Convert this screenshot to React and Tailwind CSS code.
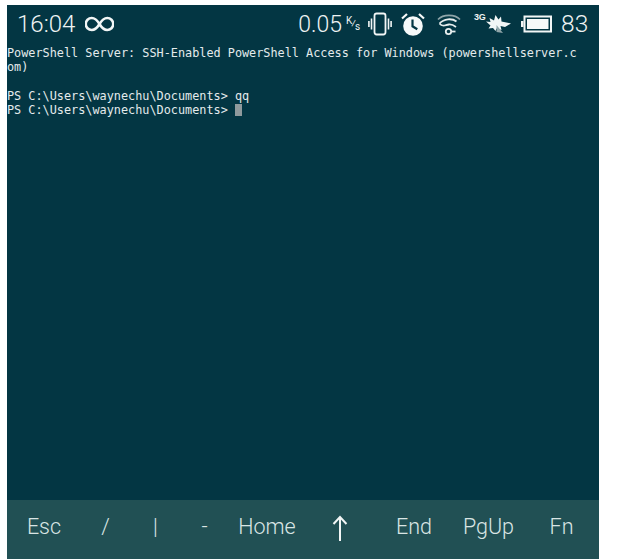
const Vibrate = () => (
  <svg width="24" height="24" viewBox="0 0 24 24" fill="none" stroke="#f2f6f6">
    <rect x="6.500" y="1.500" width="11" height="21" rx="2.200" strokeWidth="1.800" />
    <path d="M3.500 6.500v11M0.900 9v6M20.500 6.500v11M23.100 9v6" strokeWidth="1.600" />
  </svg>
);
const Alarm = () => (
  <svg width="24" height="25" viewBox="0 0 24 25">
    <circle cx="12" cy="14" r="9.800" fill="#f6f9f9" />
    <path d="M11.500 7.500v6.800l4.800 3" fill="none" stroke="#033643" strokeWidth="2.200" />
    <path d="M1 6.500 6 2M23 6.500 18 2" fill="none" stroke="#f6f9f9" strokeWidth="2.200" />
  </svg>
);
const Wifi = () => (
  <svg width="24" height="24" viewBox="0 0 24 24" fill="none">
    <path d="M1 7.500C6 2 18 2 23 7.500" stroke="#8fa5a9" strokeWidth="1.600" />
    <path d="M19.500 9.500C15 6 7 6.500 2.500 11.500" stroke="#e6eded" strokeWidth="1.800" />
    <path d="M2.500 11.500C5.500 15.500 8 13 12 12.500C15 12.200 17 13.500 19 15" stroke="#e6eded" strokeWidth="1.800" />
    <circle cx="11.500" cy="19.500" r="2.700" stroke="#e6eded" strokeWidth="1.800" />
    <path d="M14 19.500h4.500" stroke="#e6eded" strokeWidth="1.800" />
  </svg>
);
const Signal = () => (
  <svg width="25" height="22" viewBox="0 0 25 22">
    <path d="M0 8.500 4.500 9 3.500 5 8 7.500 9.500 2 12.500 6.500 15 3.500 15.500 8.500 25 10.500 19 14 14.500 13 15.500 17 10.500 15.500 9.500 18 7 15 2.500 15.500 4.500 12.500Z" fill="#f2f6f6" />
    <path d="M10.500 12 17 20 10.500 19Z" fill="#8fa5a9" />
  </svg>
);
const Battery = () => (
  <svg width="31" height="18" viewBox="0 0 31 18">
    <path d="M0 6h2.500v6h-2.500z" fill="#f2f6f6" />
    <rect x="3.500" y="1.500" width="26.500" height="15" fill="none" stroke="#f2f6f6" strokeWidth="2" />
    <rect x="6" y="4" width="21.500" height="10" fill="#f6f9f9" />
  </svg>
);
const Up = () => (
  <svg width="16" height="26" viewBox="0 0 16 26" fill="none" stroke="#f2f6f6" strokeWidth="2">
    <path d="M8 26V2M1.500 9 8 2l6.500 7" />
  </svg>
);

const keys = [
  ["Esc", "w-[74px]"],
  ["/", "w-[49px]"],
  ["|", "w-[51px]"],
  ["-", "w-[47px]"],
  ["Home", "w-[78px]"],
  ["up", "w-[67px]"],
  ["End", "w-[82px]"],
  ["PgUp", "w-[67px]"],
  ["Fn", "w-[77px] pl-[2px]"],
];

export default function App() {
  return (
    <div className="w-[621px] h-[559px] bg-white pt-[5px] pl-[7px] overflow-hidden">
      <div className="w-[592px] h-[554px] bg-[#033643] flex flex-col">
        <div className="h-[38px] flex items-center text-[#eef3f3] font-['Roboto',sans-serif] font-light">
          <span className="ml-[10px] text-[24px] leading-none">16:04</span>
          <svg className="ml-[10px]" width="29" height="16" viewBox="0 0 30 16" fill="none" stroke="#f2f6f6" strokeWidth="2.600">
            <path d="M15 8C12 3 9.500 1.800 7 1.800A6.200 6.200 0 0 0 7 14.200C9.500 14.200 12 13 15 8C18 3 20.500 1.800 23 1.800A6.200 6.200 0 0 1 23 14.200C20.500 14.200 18 13 15 8Z" />
          </svg>
          <span className="ml-[184px] text-[23px] leading-none">0.05</span>
          <span className="ml-[4px] w-[13px] h-[16px] flex text-[10px] leading-none font-normal">
            <span>K</span>
            <span className="mt-[3px] -ml-[1px]">⁄</span>
            <span className="mt-[6px] -ml-[1px]">s</span>
          </span>
          <span className="ml-[9px] flex"><Vibrate /></span>
          <span className="ml-[9px] flex"><Alarm /></span>
          <span className="ml-[12px] flex"><Wifi /></span>
          <span className="ml-[13px] flex items-start">
            <span className="w-[12px] text-[9px] leading-none font-bold tracking-tighter font-['Liberation_Sans',sans-serif]">3G</span>
            <Signal />
          </span>
          <span className="ml-[10px] flex"><Battery /></span>
          <span className="ml-[9px] text-[24.500px] leading-none">83</span>
        </div>
        <div className="flex-1 min-h-0 pt-[3px] text-[#e4ebec] text-[11.840px] leading-[14.300px] font-['DejaVu_Sans_Mono',monospace] whitespace-pre">
          <div>PowerShell Server: SSH-Enabled PowerShell Access for Windows (powershellserver.c</div>
          <div>om)</div>
          <div>&nbsp;</div>
          <div>PS C:\Users\waynechu\Documents&gt; qq</div>
          <div className="flex items-center">
            PS C:\Users\waynechu\Documents&gt; <span className="w-[7px] h-[12px] bg-[#8f9a9d]" />
          </div>
        </div>
        <div className="h-[59px] pb-[4px] bg-[#215054] flex items-center text-[#d9e5e4] text-[21.500px] font-['Roboto',sans-serif] font-light">
          {keys.map(([k, w]) => (
            <div key={k} className={`${w} flex justify-center`}>
              {k === "up" ? <Up /> : k}
            </div>
          ))}
        </div>
      </div>
    </div>
  );
}
